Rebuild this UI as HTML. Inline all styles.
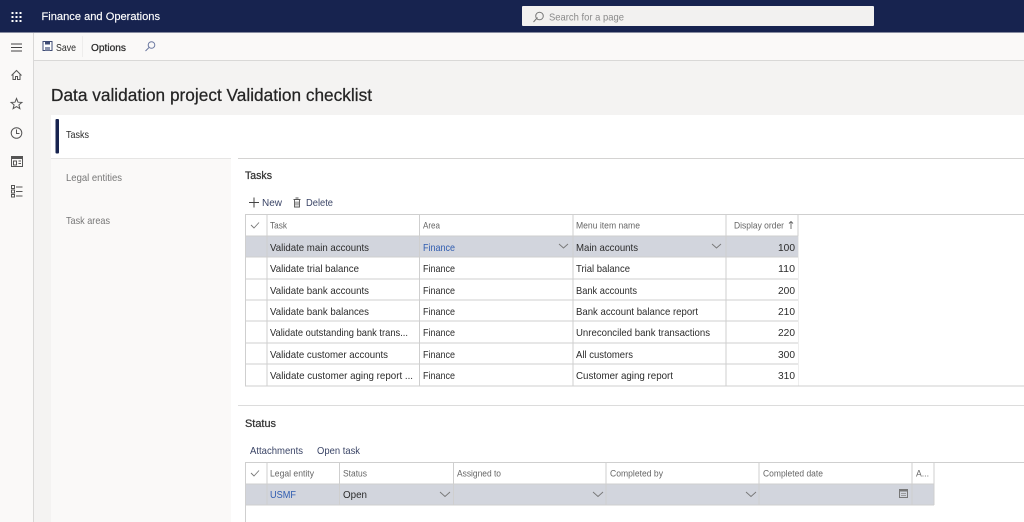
<!DOCTYPE html>
<html><head><meta charset="utf-8"><style>
html,body{margin:0;padding:0;background:#fff;width:1024px;height:522px;overflow:hidden}
svg{display:block;font-family:"Liberation Sans",sans-serif;filter:blur(.35px)}
text{white-space:pre}
.b{font-size:10.500px;fill:#2b2b2b}
.h{font-size:8.800px;fill:#666}
.n{font-size:10.300px;fill:#3a4466}
.g{font-size:10.300px;fill:#777}
.a{font-size:10.500px;fill:#2f5cb0}
.l{fill:#cfcfcf}
.i{fill:none;stroke:#555;stroke-width:1}
.c{fill:none;stroke:#777;stroke-width:.9}
</style></head><body>
<svg width="1024" height="522" viewBox="0 0 1024 522" xmlns="http://www.w3.org/2000/svg">
<rect width="1024" height="522" fill="#f4f3f2"/>
<!-- header -->
<rect width="1024" height="32.500" fill="#17234f"/>
<g fill="#fff"><rect x="11.500" y="12" width="2" height="2"/><rect x="15.500" y="12" width="2" height="2"/><rect x="19.500" y="12" width="2" height="2"/><rect x="11.500" y="16" width="2" height="2"/><rect x="15.500" y="16" width="2" height="2"/><rect x="19.500" y="16" width="2" height="2"/><rect x="11.500" y="20" width="2" height="2"/><rect x="15.500" y="20" width="2" height="2"/><rect x="19.500" y="20" width="2" height="2"/></g>
<text x="41.500" y="20" font-size="11.300px" fill="#fff" stroke="#fff" stroke-width=".15" textLength="118.500" lengthAdjust="spacingAndGlyphs">Finance and Operations</text>
<rect x="522" y="6" width="352" height="20" rx="1" fill="#f2f1f0"/>
<path d="M533.500 22l4-4.500" stroke="#777" fill="none"/><circle cx="539.500" cy="16" r="3.800" fill="none" stroke="#777"/>
<text x="549" y="20.500" font-size="10.300px" fill="#8a8a8a" textLength="75" lengthAdjust="spacingAndGlyphs">Search for a page</text>
<!-- sidebar + toolbar -->
<rect x="0" y="33" width="33" height="489" fill="#faf9f8"/>
<rect x="33" y="33" width="1" height="489" fill="#d9d8d7"/>
<rect x="34" y="33" width="990" height="27" fill="#faf9f8"/>
<rect x="34" y="60" width="990" height="1" fill="#d9d8d7"/>
<rect x="82" y="36" width="1" height="21" fill="#eeedec"/>
<!-- sidebar icons -->
<path d="M11 44h11M11 47.500h11M11 51h11" stroke="#444" fill="none"/>
<path class="i" d="M11.500 75.500l5-5 5 5M13 74.500v5h2.500v-3h2v3h2.500v-5"/>
<path class="i" d="M16.500 98.500l1.500 3.700 3.900.2-3 2.500 1 3.800-3.400-2.100-3.400 2.100 1-3.800-3-2.500 3.900-.2z"/>
<circle class="i" cx="16.500" cy="133" r="5.300"/><path class="i" d="M16.500 129.500v4h3"/>
<path class="i" d="M11.500 156.500h11v10h-11z"/><path d="M11.500 158h11" stroke="#555" stroke-width="2"/><path class="i" d="M13.500 161h3v4h-3zM18.500 161h2.500M18.500 163.500h2.500"/>
<path class="i" d="M11.500 185.500h3v3h-3zM11.500 190h3v3h-3zM11.500 194.500h3v2.500h-3zM16 187h6.500M16 191.500h6.500M16 196h6.500" stroke-width=".9"/>
<!-- toolbar content -->
<rect x="43" y="41.500" width="9" height="9" fill="#fff" stroke="#3f4c75"/><rect x="45" y="41.500" width="5" height="3" fill="#3f4c75"/><rect x="45" y="47" width="5" height="3.500" fill="#8a93ae"/>
<text x="56" y="51" class="b" textLength="20" lengthAdjust="spacingAndGlyphs">Save</text>
<text x="91" y="51" font-size="10.500px" fill="#2b2b2b" stroke="#2b2b2b" stroke-width=".25" textLength="35" lengthAdjust="spacingAndGlyphs">Options</text>
<circle cx="151.500" cy="45" r="3.300" fill="none" stroke="#6a78a0"/><path d="M149 47.500l-3.500 3.500" stroke="#6a78a0" fill="none"/>
<!-- title -->
<text x="51" y="101" font-size="17.500px" fill="#252525" stroke="#252525" stroke-width=".25" textLength="321" lengthAdjust="spacingAndGlyphs">Data validation project Validation checklist</text>
<!-- panels -->
<rect x="51" y="115" width="973" height="43" fill="#fff"/>
<rect x="55.500" y="119" width="3.500" height="34.500" rx="1" fill="#17234f"/>
<text x="66" y="138" class="b" textLength="23" lengthAdjust="spacingAndGlyphs">Tasks</text>
<rect x="51" y="158" width="180" height="364" fill="#faf9f8"/>
<rect x="51" y="158" width="180" height="1" fill="#e6e5e4"/>
<text x="66" y="181" class="g" textLength="56" lengthAdjust="spacingAndGlyphs">Legal entities</text>
<text x="66" y="224" class="g" textLength="44" lengthAdjust="spacingAndGlyphs">Task areas</text>
<rect x="231" y="158" width="793" height="364" fill="#fff"/>
<rect x="238" y="158" width="786" height="1" fill="#d4d3d2"/>
<!-- Tasks section -->
<text x="245" y="179" font-size="11px" fill="#333" stroke="#333" stroke-width=".25" textLength="27" lengthAdjust="spacingAndGlyphs">Tasks</text>
<path d="M249 202.500h10M254 197.500v10" stroke="#444" fill="none"/>
<text x="262" y="206" class="n" textLength="20" lengthAdjust="spacingAndGlyphs">New</text>
<path d="M293.500 199.500h7M294.500 199.500v7.500h5v-7.500M295.500 198h3M296 201.500v4M298 201.500v4" stroke="#555" fill="none" stroke-width=".9"/>
<text x="306" y="206" class="n" textLength="27" lengthAdjust="spacingAndGlyphs">Delete</text>
<!-- Tasks grid -->
<rect x="245" y="236" width="553" height="21" fill="#d2d5dd"/>
<rect x="798" y="236" width="1" height="150" fill="#eeeeee"/>
<g class="l">
<rect x="245" y="214" width="779" height="1"/>
<rect x="245" y="235.500" width="553" height="1"/>
<rect x="245" y="256.500" width="553" height="1"/>
<rect x="245" y="278.500" width="553" height="1"/>
<rect x="245" y="299.500" width="553" height="1"/>
<rect x="245" y="320.500" width="553" height="1"/>
<rect x="245" y="342.500" width="553" height="1"/>
<rect x="245" y="363.500" width="553" height="1"/>
<rect x="245" y="385.500" width="779" height="1"/>
<rect x="245" y="214" width="1" height="172"/>
<rect x="266.500" y="214" width="1" height="172"/>
<rect x="419" y="214" width="1" height="172"/>
<rect x="572.500" y="214" width="1" height="172"/>
<rect x="725.500" y="214" width="1" height="172"/>
<rect x="797.500" y="214" width="1" height="22"/>
</g>
<path class="c" d="M251 225l3 3 5-5.500"/>
<text x="270" y="228.500" class="h" textLength="17" lengthAdjust="spacingAndGlyphs">Task</text>
<text x="423" y="228.500" class="h" textLength="17" lengthAdjust="spacingAndGlyphs">Area</text>
<text x="576" y="228.500" class="h" textLength="64" lengthAdjust="spacingAndGlyphs">Menu item name</text>
<text x="734" y="228.500" class="h" textLength="50" lengthAdjust="spacingAndGlyphs">Display order</text>
<path d="M791 229v-7M789 223.500l2-2 2 2" stroke="#666" fill="none" stroke-width=".9"/>
<text x="270" y="251" class="b" textLength="99" lengthAdjust="spacingAndGlyphs">Validate main accounts</text>
<text x="270" y="272" class="b" textLength="89" lengthAdjust="spacingAndGlyphs">Validate trial balance</text>
<text x="270" y="294" class="b" textLength="99" lengthAdjust="spacingAndGlyphs">Validate bank accounts</text>
<text x="270" y="315" class="b" textLength="99" lengthAdjust="spacingAndGlyphs">Validate bank balances</text>
<text x="270" y="336" class="b" textLength="138" lengthAdjust="spacingAndGlyphs">Validate outstanding bank trans...</text>
<text x="270" y="358" class="b" textLength="118" lengthAdjust="spacingAndGlyphs">Validate customer accounts</text>
<text x="270" y="379" class="b" textLength="143" lengthAdjust="spacingAndGlyphs">Validate customer aging report ...</text>
<text x="423" y="251" class="a" textLength="32" lengthAdjust="spacingAndGlyphs">Finance</text>
<text x="423" y="272" class="b" textLength="32" lengthAdjust="spacingAndGlyphs">Finance</text>
<text x="423" y="294" class="b" textLength="32" lengthAdjust="spacingAndGlyphs">Finance</text>
<text x="423" y="315" class="b" textLength="32" lengthAdjust="spacingAndGlyphs">Finance</text>
<text x="423" y="336" class="b" textLength="32" lengthAdjust="spacingAndGlyphs">Finance</text>
<text x="423" y="358" class="b" textLength="32" lengthAdjust="spacingAndGlyphs">Finance</text>
<text x="423" y="379" class="b" textLength="32" lengthAdjust="spacingAndGlyphs">Finance</text>
<text x="576" y="251" class="b" textLength="62" lengthAdjust="spacingAndGlyphs">Main accounts</text>
<text x="576" y="272" class="b" textLength="54" lengthAdjust="spacingAndGlyphs">Trial balance</text>
<text x="576" y="294" class="b" textLength="61" lengthAdjust="spacingAndGlyphs">Bank accounts</text>
<text x="576" y="315" class="b" textLength="122" lengthAdjust="spacingAndGlyphs">Bank account balance report</text>
<text x="576" y="336" class="b" textLength="134" lengthAdjust="spacingAndGlyphs">Unreconciled bank transactions</text>
<text x="576" y="358" class="b" textLength="57" lengthAdjust="spacingAndGlyphs">All customers</text>
<text x="576" y="379" class="b" textLength="97" lengthAdjust="spacingAndGlyphs">Customer aging report</text>
<text x="778" y="251" class="b" textLength="17" lengthAdjust="spacingAndGlyphs">100</text>
<text x="778" y="272" class="b" textLength="17" lengthAdjust="spacingAndGlyphs">110</text>
<text x="778" y="294" class="b" textLength="17" lengthAdjust="spacingAndGlyphs">200</text>
<text x="778" y="315" class="b" textLength="17" lengthAdjust="spacingAndGlyphs">210</text>
<text x="778" y="336" class="b" textLength="17" lengthAdjust="spacingAndGlyphs">220</text>
<text x="778" y="358" class="b" textLength="17" lengthAdjust="spacingAndGlyphs">300</text>
<text x="778" y="379" class="b" textLength="17" lengthAdjust="spacingAndGlyphs">310</text>
<path class="c" d="M559 244l4.500 4 4.500-4M712 244l4.500 4 4.500-4"/>
<!-- Status -->
<rect x="238" y="405" width="786" height="1" fill="#dcdcdc"/>
<text x="245" y="427" font-size="11px" fill="#333" stroke="#333" stroke-width=".25" textLength="31" lengthAdjust="spacingAndGlyphs">Status</text>
<text x="250" y="454" class="n" textLength="53" lengthAdjust="spacingAndGlyphs">Attachments</text>
<text x="317" y="454" class="n" textLength="43" lengthAdjust="spacingAndGlyphs">Open task</text>
<rect x="245" y="484" width="689" height="21" fill="#d2d5dd"/>
<g class="l">
<rect x="245" y="462" width="779" height="1"/>
<rect x="245" y="483.500" width="689" height="1"/>
<rect x="245" y="504.500" width="689" height="1"/>
<rect x="245" y="462" width="1" height="60"/>
<rect x="266.500" y="462" width="1" height="43"/>
<rect x="339" y="462" width="1" height="43"/>
<rect x="453" y="462" width="1" height="43"/>
<rect x="605.500" y="462" width="1" height="43"/>
<rect x="758.500" y="462" width="1" height="43"/>
<rect x="911.500" y="462" width="1" height="43"/>
<rect x="933.500" y="462" width="1" height="43"/>
</g>
<path class="c" d="M251 473l3 3 5-5.500"/>
<text x="270" y="476.500" class="h" textLength="44" lengthAdjust="spacingAndGlyphs">Legal entity</text>
<text x="343" y="476.500" class="h" textLength="24" lengthAdjust="spacingAndGlyphs">Status</text>
<text x="457" y="476.500" class="h" textLength="44" lengthAdjust="spacingAndGlyphs">Assigned to</text>
<text x="610" y="476.500" class="h" textLength="53" lengthAdjust="spacingAndGlyphs">Completed by</text>
<text x="763" y="476.500" class="h" textLength="60" lengthAdjust="spacingAndGlyphs">Completed date</text>
<text x="916" y="476.500" class="h" textLength="13" lengthAdjust="spacingAndGlyphs">A...</text>
<text x="270" y="498" class="a" textLength="26" lengthAdjust="spacingAndGlyphs">USMF</text>
<text x="343" y="498" class="b" textLength="24" lengthAdjust="spacingAndGlyphs">Open</text>
<path class="c" d="M440 492l5 4.500 5-4.500M593 492l5 4.500 5-4.500M746 492l5 4.500 5-4.500"/>
<rect x="899.500" y="489.500" width="8" height="8" fill="none" stroke="#777"/><rect x="899.500" y="489.500" width="8" height="2" fill="#777"/><path d="M901 493.500h5M901 495.500h5" stroke="#888" stroke-width=".8"/>
</svg>
</body></html>
